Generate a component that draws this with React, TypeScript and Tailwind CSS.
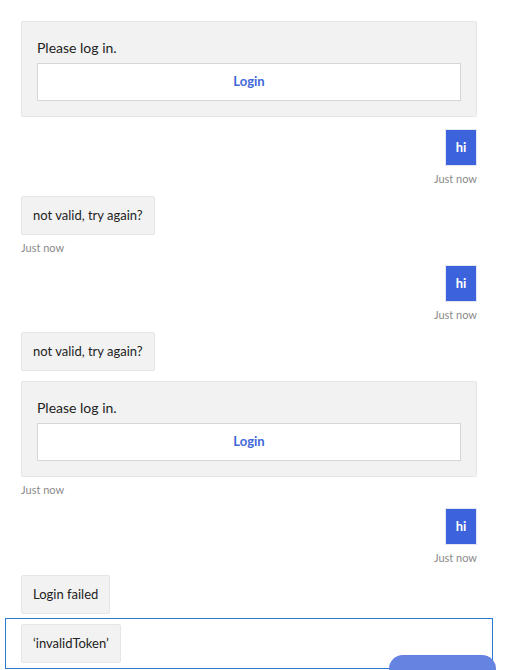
import React from "react";

function Stamp({ right }: { right?: boolean }) {
  return (
    <div className={`mt-[6px] text-[11px] leading-[14px] text-[#8a8a8a] ${right ? "text-right" : ""}`}>
      Just now
    </div>
  );
}

function LoginCard() {
  return (
    <div className="rounded-[2px] border border-[#e6e6e6] bg-[#f2f2f2] px-[15px] pt-[16px] pb-[15px]">
      <p className="text-[14px] leading-[20px] text-[#222]">Please log in.</p>
      <button className="mt-[5px] flex h-[38px] w-full items-center justify-center border border-[#d6d6d6] bg-white text-[13px] font-bold text-[#3f68d8]">
        Login
      </button>
    </div>
  );
}

function BotBubble({ text }: { text: string }) {
  return (
    <div className="inline-flex h-[39px] items-center rounded-[2px] border border-[#e6e6e6] bg-[#f2f2f2] px-[11px] text-[13px] text-[#222]">
      {text}
    </div>
  );
}

function UserBubble({ text }: { text: string }) {
  return (
    <div className="flex justify-end">
      <div className="flex h-[37px] w-[32px] items-center justify-center rounded-[1px] border border-[#e4e8f5] bg-[#3c63dc] text-[13px] font-bold text-white">
        {text}
      </div>
    </div>
  );
}

export default function App() {
  return (
    <div
      className="relative h-[670px] w-[508px] overflow-hidden bg-white"
      style={{ fontFamily: "Lato, 'Noto Sans', sans-serif" }}
    >
      <div className="flex w-[477px] flex-col pl-[21px] pt-[21px]">
        <LoginCard />

        <div className="mt-[12px]">
          <UserBubble text="hi" />
          <Stamp right />
        </div>

        <div className="mt-[10px]">
          <BotBubble text="not valid, try again?" />
          <Stamp />
        </div>

        <div className="mt-[10px]">
          <UserBubble text="hi" />
          <Stamp right />
        </div>

        <div className="mt-[10px]">
          <BotBubble text="not valid, try again?" />
        </div>

        <div className="mt-[10px]">
          <LoginCard />
          <Stamp />
        </div>

        <div className="mt-[11px]">
          <UserBubble text="hi" />
          <Stamp right />
        </div>

        <div className="mt-[10px]">
          <BotBubble text="Login failed" />
        </div>

        <div className="-mx-4 mt-[4px] border border-[#2b7bd1] px-[15px] pt-[5px] pb-[5px]">
          <BotBubble text="‘invalidToken’" />
        </div>
      </div>

      {/* scroll-to-bottom pill */}
      <div className="absolute left-[389px] top-[655px] h-[30px] w-[107px] rounded-[14px] bg-[#6583e0]" />
    </div>
  );
}
